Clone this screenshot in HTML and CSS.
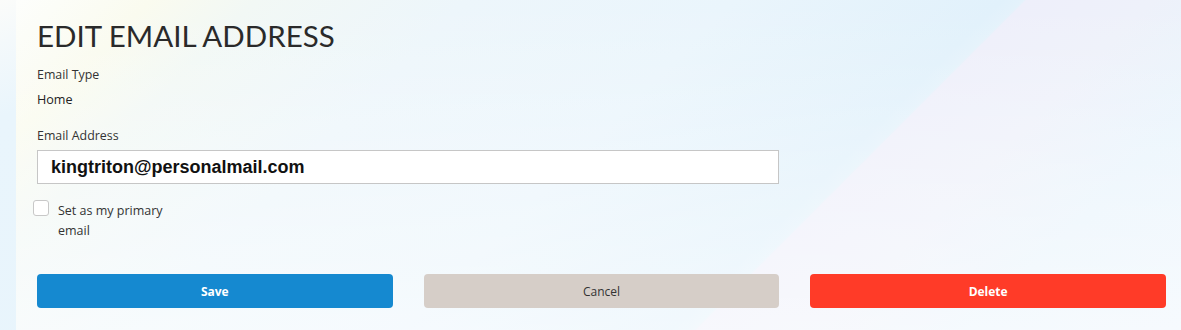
FILE: index.html
```html
<!DOCTYPE html>
<html>
<head>
<meta charset="utf-8">
<link rel="stylesheet" href="styles.css">
</head>
<body>
<div class="panel">
  <h1 class="title">EDIT EMAIL ADDRESS</h1>
  <div class="field">
    <div class="label">Email Type</div>
    <div class="value">Home</div>
  </div>
  <div class="field field-email">
    <div class="label">Email Address</div>
    <input class="input" type="text" value="kingtriton@personalmail.com">
  </div>
  <label class="check">
    <span class="box"></span>
    <span class="check-text">Set as my primary email</span>
  </label>
  <div class="actions">
    <button class="btn btn-save">Save</button>
    <button class="btn btn-cancel">Cancel</button>
    <button class="btn btn-delete">Delete</button>
  </div>
</div>
</body>
</html>
```
FILE: styles.css
```css
html, body {
  margin: 0;
  padding: 0;
  height: 100%;
}
body {
  width: 1181px;
  height: 330px;
  overflow: hidden;
  padding-left: 16px;
  box-sizing: border-box;
  background:
    linear-gradient(160deg, #fbfcfa 0px, #f4f9fb 40px, #e9f5fc 110px, #e7f4fc 100%);
  font-family: "Open Sans", "Noto Sans", sans-serif;
  color: #333;
}
.panel {
  height: 100%;
  box-sizing: border-box;
  padding: 18px 15px 0 21px;
  background:
    linear-gradient(to bottom, rgba(255,255,255,0) 0px, rgba(255,255,255,0.3) 170px, rgba(255,255,255,0.55) 330px),
    linear-gradient(135deg, #fdfefc 0%, #fafbef 9%, #f2f8f5 16%, #edf6fb 30%, #eaf5fc 48%, #e1f1fb 66%, #e4f2fb 67.4%, #eeeffa 67.6%, #eef1fa 76%, #e9f4fc 86%, #ecf5fd 100%);
}
.title {
  margin: 0;
  font-family: "Lato", "Open Sans", sans-serif;
  font-weight: 400;
  font-size: 29.5px;
  line-height: 36px;
  color: #2a2a2a;
  letter-spacing: 0;
}
.field {
  margin-top: 10px;
}
.label {
  font-size: 12.4px;
  line-height: 22px;
  color: #333;
}
.value {
  font-size: 12.6px;
  line-height: 28px;
  color: #222;
}
.field-email {
  margin-top: 13px;
}
.field-email .label {
  line-height: 18px;
  margin-bottom: 5px;
}
.input {
  display: block;
  width: 742px;
  height: 34px;
  box-sizing: border-box;
  border: 1px solid #c6c6c6;
  background: #fff;
  padding: 0 13px;
  font-family: "Liberation Sans", Arial, sans-serif;
  font-weight: 700;
  font-size: 18px;
  color: #111;
  outline: none;
}
.check {
  display: flex;
  align-items: flex-start;
  gap: 9px;
  margin-top: 16px;
  margin-left: -4px;
}
.box {
  width: 16px;
  height: 16px;
  box-sizing: border-box;
  border: 1px solid #c8c8c8;
  border-radius: 3px;
  background: #fff;
  flex: none;
}
.check-text {
  width: 120px;
  font-size: 12.5px;
  line-height: 20px;
  margin-top: 1px;
  color: #333;
}
.actions {
  display: grid;
  grid-template-columns: 1fr 1fr 1fr;
  column-gap: 31px;
  margin-top: 33px;
  width: 1129px;
}
.btn {
  height: 34px;
  border: none;
  border-radius: 4px;
  font-family: "Open Sans", "Noto Sans", sans-serif;
  font-size: 12px;
  cursor: pointer;
}
.btn-save {
  background: #1589d0;
  color: #fff;
  font-weight: 700;
}
.btn-cancel {
  background: #d6cec8;
  color: #333;
}
.btn-delete {
  background: #ff3b28;
  color: #fff;
  font-weight: 700;
}
```
